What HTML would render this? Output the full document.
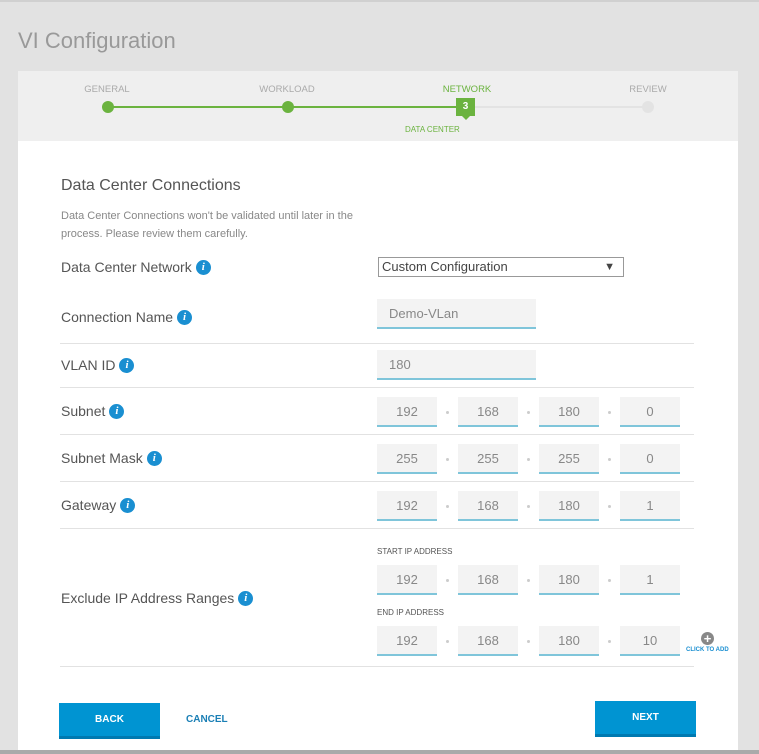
<!DOCTYPE html>
<html><head><meta charset="utf-8"><style>
*{margin:0;padding:0;box-sizing:border-box}
body{width:759px;height:754px;background:#e2e2e2;font-family:"Liberation Sans",sans-serif;position:relative;overflow:hidden}
.a{position:absolute}
.card{left:18px;top:71px;width:720px;height:679px;background:#fff}
.hdr{left:18px;top:71px;width:720px;height:70px;background:#efefef}
.lbl{font-size:14px;color:#555;left:61px;white-space:nowrap;line-height:16px}
.i{display:inline-block;width:15px;height:15px;border-radius:50%;background:#1a8fd1;color:#fff;font:italic bold 11px "Liberation Serif",serif;text-align:center;line-height:15px;vertical-align:top;margin-left:4px;margin-top:1px}
.o{width:60px;height:30px;background:#f3f3f3;border-bottom:2px solid #7fc5da;color:#888;font-size:13px;text-align:center;line-height:29px}
.d{width:3px;height:3px;background:#ccc;border-radius:50%}
.sep{left:60px;width:634px;height:1px;background:#e2e2e2}
.st{font-size:9.5px;color:#aaa;text-align:center;width:100px}
.btn{background:#0094d2;color:#fff;font-size:10px;font-weight:bold;text-align:center;border-bottom:3px solid #0079b0}
</style></head><body>
<div class="a" style="left:0;top:0;width:759px;height:2px;background:#d0d0d0"></div>
<div class="a" style="left:18px;top:28px;font-size:22px;color:#999">VI Configuration</div>
<div class="a card"></div>
<div class="a hdr"></div>
<div class="a st" style="left:57px;top:84px">GENERAL</div>
<div class="a st" style="left:237px;top:84px">WORKLOAD</div>
<div class="a st" style="left:417px;top:84px;color:#6bb33f">NETWORK</div>
<div class="a st" style="left:598px;top:84px">REVIEW</div>
<div class="a" style="left:108px;top:106px;width:358px;height:2px;background:#6bb33f"></div>
<div class="a" style="left:466px;top:106px;width:182px;height:2px;background:#e3e3e3"></div>
<div class="a" style="left:102px;top:101px;width:12px;height:12px;border-radius:50%;background:#6bb33f"></div>
<div class="a" style="left:282px;top:101px;width:12px;height:12px;border-radius:50%;background:#6bb33f"></div>
<div class="a" style="left:642px;top:101px;width:12px;height:12px;border-radius:50%;background:#e3e3e3"></div>
<div class="a" style="left:456px;top:98px;width:19px;height:18px;background:#6bb33f;color:#fff;font-size:10px;font-weight:bold;text-align:center;line-height:18px">3</div>
<div class="a" style="left:462px;top:116px;width:0;height:0;border-left:4px solid transparent;border-right:4px solid transparent;border-top:4px solid #6bb33f"></div>
<div class="a" style="left:405px;top:125px;font-size:8px;color:#6bb33f">DATA CENTER</div>

<div class="a" style="left:61px;top:177px;font-size:16px;color:#555">Data Center Connections</div>
<div class="a" style="left:61px;top:207px;font-size:11px;color:#888;line-height:18px;width:330px">Data Center Connections won't be validated until later in the process. Please review them carefully.</div>

<div class="a lbl" style="top:259px">Data Center Network<span class="i">i</span></div>
<div class="a" style="left:378px;top:257px;width:246px;height:20px;border:1px solid #999;font-size:13px;color:#444;padding-left:3px;line-height:18px">Custom Configuration<span style="position:absolute;right:8px;font-size:11px">▼</span></div>

<div class="a lbl" style="top:309px">Connection Name<span class="i">i</span></div>
<div class="a o" style="left:377px;top:299px;width:159px;text-align:left;padding-left:12px">Demo-VLan</div>
<div class="a sep" style="top:343px"></div>
<div class="a lbl" style="top:357px">VLAN ID<span class="i">i</span></div>
<div class="a o" style="left:377px;top:350px;width:159px;text-align:left;padding-left:12px">180</div>
<div class="a sep" style="top:387px"></div>
<div class="a lbl" style="top:403px">Subnet<span class="i">i</span></div>
<div class="a sep" style="top:434px"></div>
<div class="a lbl" style="top:450px">Subnet Mask<span class="i">i</span></div>
<div class="a sep" style="top:481px"></div>
<div class="a lbl" style="top:497px">Gateway<span class="i">i</span></div>
<div class="a sep" style="top:528px"></div>
<div class="a lbl" style="top:590px">Exclude IP Address Ranges<span class="i">i</span></div>
<div class="a" style="left:377px;top:547px;font-size:8px;color:#555">START IP ADDRESS</div>
<div class="a" style="left:377px;top:608px;font-size:8px;color:#555">END IP ADDRESS</div>
<div class="a sep" style="top:666px"></div>

<div class="a o" style="left:377px;top:397px">192</div><div class="a o" style="left:458px;top:397px">168</div><div class="a o" style="left:539px;top:397px">180</div><div class="a o" style="left:620px;top:397px">0</div>
<div class="a d" style="left:446px;top:411px"></div><div class="a d" style="left:527px;top:411px"></div><div class="a d" style="left:608px;top:411px"></div>
<div class="a o" style="left:377px;top:444px">255</div><div class="a o" style="left:458px;top:444px">255</div><div class="a o" style="left:539px;top:444px">255</div><div class="a o" style="left:620px;top:444px">0</div>
<div class="a d" style="left:446px;top:458px"></div><div class="a d" style="left:527px;top:458px"></div><div class="a d" style="left:608px;top:458px"></div>
<div class="a o" style="left:377px;top:491px">192</div><div class="a o" style="left:458px;top:491px">168</div><div class="a o" style="left:539px;top:491px">180</div><div class="a o" style="left:620px;top:491px">1</div>
<div class="a d" style="left:446px;top:505px"></div><div class="a d" style="left:527px;top:505px"></div><div class="a d" style="left:608px;top:505px"></div>
<div class="a o" style="left:377px;top:565px">192</div><div class="a o" style="left:458px;top:565px">168</div><div class="a o" style="left:539px;top:565px">180</div><div class="a o" style="left:620px;top:565px">1</div>
<div class="a d" style="left:446px;top:579px"></div><div class="a d" style="left:527px;top:579px"></div><div class="a d" style="left:608px;top:579px"></div>
<div class="a o" style="left:377px;top:626px">192</div><div class="a o" style="left:458px;top:626px">168</div><div class="a o" style="left:539px;top:626px">180</div><div class="a o" style="left:620px;top:626px">10</div>
<div class="a d" style="left:446px;top:640px"></div><div class="a d" style="left:527px;top:640px"></div><div class="a d" style="left:608px;top:640px"></div>
<div class="a" style="left:701px;top:632px;width:13px;height:13px;border-radius:50%;background:#888;color:#fff;font-size:13px;font-weight:bold;line-height:13px;text-align:center">+</div>
<div class="a" style="left:686px;top:647px;font-size:6px;font-weight:bold;color:#1a8fd1">CLICK TO ADD</div>

<div class="a btn" style="left:59px;top:703px;width:101px;height:36px;line-height:33px">BACK</div>
<div class="a" style="left:186px;top:714px;font-size:10px;font-weight:bold;color:#1a7fb5">CANCEL</div>
<div class="a btn" style="left:595px;top:701px;width:101px;height:36px;line-height:33px">NEXT</div>
<div class="a" style="left:0;top:750px;width:759px;height:4px;background:#aaa"></div>
</body></html>
